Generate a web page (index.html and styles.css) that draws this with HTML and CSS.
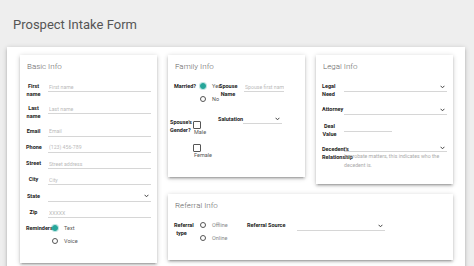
FILE: index.html
```html
<!DOCTYPE html>
<html>
  <head>
    <title>Prospect Intake Form</title>
    <link rel="stylesheet" href="styles.css">
  </head>
  <body>
    <header class="page-header">
      <h1 class="page-title">Prospect Intake Form</h1>
    </header>
    <main class="panel">
      <section class="card card-basic">
        <h2 class="card-title">Basic Info</h2>
        <div class="field">
          <label class="field-label" for="first_name">First name</label>
          <input class="field-input" id="first_name" placeholder="First name" />
        </div>
        <div class="field">
          <label class="field-label" for="last_name">Last name</label>
          <input class="field-input" id="last_name" placeholder="Last name" />
        </div>
        <div class="field">
          <label class="field-label" for="email">Email</label>
          <input class="field-input" id="email" placeholder="Email" />
        </div>
        <div class="field">
          <label class="field-label" for="phone">Phone</label>
          <input class="field-input" id="phone" placeholder="(123) 456-789" />
        </div>
        <div class="field">
          <label class="field-label" for="street">Street</label>
          <input class="field-input" id="street" placeholder="Street address" />
        </div>
        <div class="field">
          <label class="field-label" for="city">City</label>
          <input class="field-input" id="city" placeholder="City" />
        </div>
        <div class="field">
          <label class="field-label">State</label>
          <div class="field-select">
            <svg class="caret" width="5" height="4" viewBox="0 0 5 4"><polyline points="0.6,0.8 2.5,2.8 4.4,0.8" fill="none" stroke="#444" stroke-width="1"/></svg>
          </div>
        </div>
        <div class="field">
          <label class="field-label" for="zip">Zip</label>
          <input class="field-input" id="zip" placeholder="XXXXX" />
        </div>
        <div class="field">
          <label class="field-label label-left">Reminders</label>
          <div class="radio-group">
            <div class="radio-option"><span class="radio checked"></span><span class="option-text">Text</span></div>
            <div class="radio-option"><span class="radio"></span><span class="option-text">Voice</span></div>
          </div>
        </div>
      </section>

      <section class="card card-family">
        <h2 class="card-title">Family Info</h2>
        <div class="field">
          <label class="field-label">Married?</label>
          <div class="radio-group family-radios">
            <div class="radio-option"><span class="radio checked"></span><span class="option-text">Yes</span></div>
            <div class="radio-option"><span class="radio"></span><span class="option-text">No</span></div>
          </div>
          <label class="field-label spouse-label" for="spouse_name">Spouse Name</label>
          <input class="field-input spouse-input" id="spouse_name" placeholder="Spouse first name" />
        </div>
        <div class="field gender-field">
          <label class="field-label gender-label">Spouse's Gender?</label>
          <div class="check-group">
            <div class="check-option"><span class="checkbox"></span><span class="option-text">Male</span></div>
            <div class="check-option"><span class="checkbox"></span><span class="option-text">Female</span></div>
          </div>
          <label class="field-label spouse-label salutation-label">Salutation</label>
          <div class="field-select spouse-input salutation-select">
            <svg class="caret" width="5" height="4" viewBox="0 0 5 4"><polyline points="0.6,0.8 2.5,2.8 4.4,0.8" fill="none" stroke="#444" stroke-width="1"/></svg>
          </div>
        </div>
      </section>

      <section class="card card-legal">
        <h2 class="card-title">Legal Info</h2>
        <div class="field">
          <label class="field-label label-left">Legal Need</label>
          <div class="field-select">
            <svg class="caret" width="5" height="4" viewBox="0 0 5 4"><polyline points="0.6,0.8 2.5,2.8 4.4,0.8" fill="none" stroke="#444" stroke-width="1"/></svg>
          </div>
        </div>
        <div class="field">
          <label class="field-label">Attorney</label>
          <div class="field-select">
            <svg class="caret" width="5" height="4" viewBox="0 0 5 4"><polyline points="0.6,0.8 2.5,2.8 4.4,0.8" fill="none" stroke="#444" stroke-width="1"/></svg>
          </div>
        </div>
        <div class="field">
          <label class="field-label" for="deal_value">Deal Value</label>
          <input class="field-input deal-input" id="deal_value" />
        </div>
        <div class="field">
          <label class="field-label label-left">Decedent's Relationship</label>
          <div class="select-wrap">
            <div class="field-select short-select">
              <svg class="caret" width="5" height="4" viewBox="0 0 5 4"><polyline points="0.6,0.8 2.5,2.8 4.4,0.8" fill="none" stroke="#444" stroke-width="1"/></svg>
            </div>
            <p class="help-text">In probate matters, this indicates who the decedent is.</p>
          </div>
        </div>
      </section>

      <section class="card card-referral">
        <h2 class="card-title">Referral Info</h2>
        <div class="field">
          <label class="field-label">Referral type</label>
          <div class="radio-group referral-radios">
            <div class="radio-option"><span class="radio"></span><span class="option-text light">Offline</span></div>
            <div class="radio-option"><span class="radio"></span><span class="option-text light">Online</span></div>
          </div>
          <label class="field-label source-label">Referral Source</label>
          <div class="field-select source-select">
            <svg class="caret" width="5" height="4" viewBox="0 0 5 4"><polyline points="0.6,0.8 2.5,2.8 4.4,0.8" fill="none" stroke="#444" stroke-width="1"/></svg>
          </div>
        </div>
      </section>
    </main>
  </body>
</html>
```

FILE: styles.css
```css
body {
  margin: 0;
  background-color: #eeeeee;
  font-family: Roboto, "Noto Sans", sans-serif;
  overflow: hidden;
}

.page-header {
  height: 47px;
  box-sizing: border-box;
  padding: 16px 13px 0;
}

.page-title {
  margin: 0;
  font-size: 13px;
  font-weight: 400;
  line-height: 18px;
  color: #555;
}

.panel {
  display: grid;
  grid-template-columns: repeat(3, 137px);
  grid-template-rows: auto auto;
  column-gap: 11px;
  row-gap: 7px;
  align-items: start;
  margin: 0 9px 0 7px;
  padding: 8px 12px 10px 13px;
  background-color: #fff;
  box-shadow: 0 2px 2px 0 rgba(0, 0, 0, 0.14), 0 1px 5px 0 rgba(0, 0, 0, 0.2);
}

.card {
  background-color: #fff;
  padding: 7px 6px 18px;
  box-shadow: 0 2px 2px 0 rgba(0, 0, 0, 0.14), 0 3px 1px -2px rgba(0, 0, 0, 0.12),
    0 1px 5px 0 rgba(0, 0, 0, 0.2);
}

.card-basic {
  grid-column: 1;
  grid-row: 1 / span 2;
}

.card-family {
  grid-column: 2;
  grid-row: 1;
}

.card-legal {
  grid-column: 3;
  grid-row: 1;
  padding-bottom: 14px;
}

.card-referral {
  grid-column: 2 / span 2;
  grid-row: 2;
}

.card-title {
  margin: 0 0 10px;
  padding-left: 1px;
  font-size: 8px;
  font-weight: 300;
  line-height: 10px;
  color: #666;
}

.field {
  display: flex;
  align-items: flex-start;
  margin-bottom: 6.3px;
}

.card-legal .field {
  margin-bottom: 7px;
}

.card .field:last-child {
  margin-bottom: 0;
}

.field-label {
  flex: none;
  width: 15px;
  margin-right: 7px;
  font-size: 5.5px;
  font-weight: 700;
  line-height: 8px;
  text-align: center;
  color: #222;
}

.label-left {
  text-align: left;
}

.field-input {
  flex: 1;
  min-width: 0;
  height: 9px;
  padding: 0 0 0 1px;
  border: none;
  border-bottom: 1px solid #d6d6d6;
  outline: none;
  font-family: inherit;
  font-size: 5.2px;
  color: #444;
  background: transparent;
}

.field-input::placeholder {
  color: #bbb;
}

.field-select {
  flex: 1;
  height: 9px;
  display: flex;
  justify-content: flex-end;
  align-items: center;
  border-bottom: 1px solid #d6d6d6;
}

.short-select {
  height: 6px;
}

.caret {
  margin-right: 2px;
}

.radio-group {
  display: flex;
  flex-direction: column;
}

.radio-option {
  display: flex;
  align-items: center;
  height: 8px;
  margin-bottom: 5px;
}

.radio-option:last-child {
  margin-bottom: 0;
}

.radio {
  flex: none;
  width: 4px;
  height: 4px;
  margin-left: 4px;
  border: 1.3px solid #555;
  border-radius: 50%;
}

.radio.checked {
  background-color: #26a69a;
  border-color: #26a69a;
  box-shadow: 0 0 0 1px rgba(38, 166, 154, 0.3);
}

.option-text {
  margin-left: 6px;
  font-size: 5.5px;
  color: #555;
  white-space: nowrap;
}

.option-text.light {
  color: #888;
}

.family-radios {
  width: 23px;
  flex: none;
}

.spouse-label {
  width: 18px;
}

.spouse-input {
  flex: none;
  width: 39px;
}

.gender-field {
  margin-top: 15px;
}

.gender-label {
  margin-left: -4px;
  margin-right: 8px;
}

.salutation-label {
  margin-top: -3px;
}

.salutation-select {
  margin-top: -4px;
}

.check-group {
  flex: none;
  width: 25px;
  margin-top: 3px;
  display: flex;
  flex-direction: column;
}

.check-option {
  display: flex;
  flex-direction: column;
  margin-bottom: 8.4px;
}

.check-option:last-child {
  margin-bottom: 0;
}

.check-option .option-text {
  margin-left: 1px;
  line-height: 7px;
}

.checkbox {
  width: 6px;
  height: 6px;
  border: 1.3px solid #555;
  border-radius: 1px;
}

.deal-input {
  flex: none;
  width: 47px;
}

.select-wrap {
  flex: 1;
}

.help-text {
  margin: 0;
  font-size: 5.2px;
  line-height: 9px;
  color: #aaa;
}

.referral-radios {
  flex: none;
  width: 51px;
}

.source-label {
  width: auto;
  white-space: nowrap;
  margin-right: 12px;
}

.source-select {
  flex: none;
  width: 88px;
}
```
